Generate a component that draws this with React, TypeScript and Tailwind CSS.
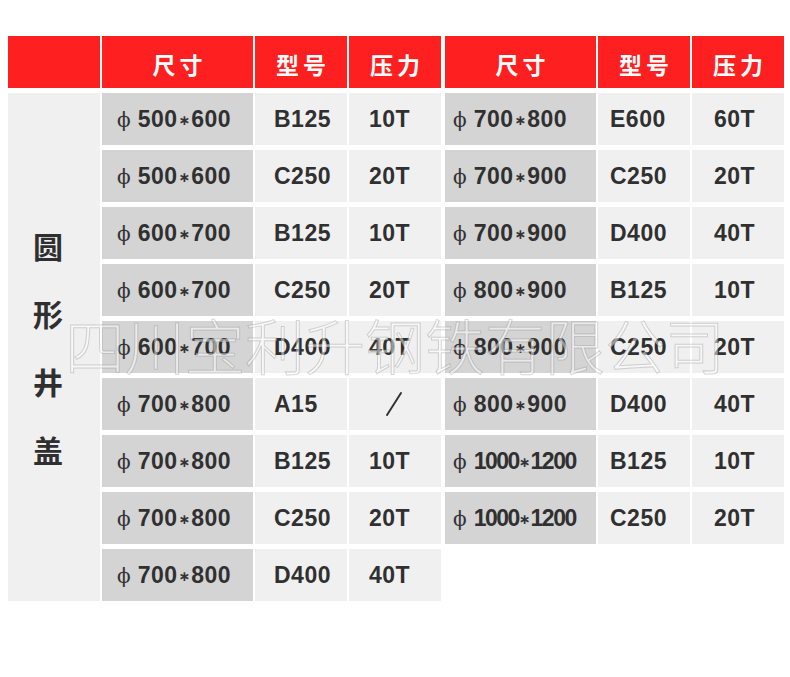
import React from "react";

type Row = [string, string, string];

const leftRows: Row[] = [
  ["500∗600", "B125", "10T"],
  ["500∗600", "C250", "20T"],
  ["600∗700", "B125", "10T"],
  ["600∗700", "C250", "20T"],
  ["600∗700", "D400", "40T"],
  ["700∗800", "A15", "/"],
  ["700∗800", "B125", "10T"],
  ["700∗800", "C250", "20T"],
  ["700∗800", "D400", "40T"],
];

const rightRows: Row[] = [
  ["700∗800", "E600", "60T"],
  ["700∗900", "C250", "20T"],
  ["700∗900", "D400", "40T"],
  ["800∗900", "B125", "10T"],
  ["800∗900", "C250", "20T"],
  ["800∗900", "D400", "40T"],
  ["1000∗1200", "B125", "10T"],
  ["1000∗1200", "C250", "20T"],
];

const num = "font-['Liberation_Sans',Arial,sans-serif] font-bold text-[23px] text-[#303030]";

function Size({ v }: { v: string }) {
  const [a, b] = v.split("∗");
  const long = v.length > 8;
  return (
    <span className="flex items-center">
      <span className="font-['DejaVu_Serif','Liberation_Serif',serif] font-normal text-[20px] text-[#333] mr-[7px] mt-[2px]">ϕ</span>
      <span className={long ? `${num} tracking-[-1.5px]` : `${num} tracking-[0.5px]`}>{a}</span>
      <span className={long ? "font-['DejaVu_Sans',sans-serif] font-bold text-[14px] text-[#333] mt-[3px] mx-[0px]" : "font-['DejaVu_Sans',sans-serif] font-bold text-[14px] text-[#333] mt-[3px] mx-[1px]"}>∗</span>
      <span className={long ? `${num} tracking-[-1.5px]` : `${num} tracking-[0.5px]`}>{b}</span>
    </span>
  );
}

function Header({ text }: { text: string }) {
  return (
    <div className="bg-[#fe2020] h-[52px] flex items-center justify-center pt-[5px]">
      <span className="font-['Noto_Sans_CJK_SC',sans-serif] font-bold text-[23px] text-white tracking-[4px] pl-[4px]">{text}</span>
    </div>
  );
}

function Pressure({ v }: { v: string }) {
  if (v === "/") {
    return (
      <svg width="18" height="26" viewBox="0 0 18 26" className="ml-[16px]">
        <line x1="2" y1="24" x2="16" y2="2" stroke="#333" strokeWidth="2" strokeLinecap="round" />
      </svg>
    );
  }
  return <span className={`${num} tracking-[0.5px]`}>{v}</span>;
}

export default function App() {
  return (
    <div className="w-[790px] h-[677px] bg-white relative overflow-hidden">
      <div className="flex gap-[4px] pl-[8px] pt-[36px]">
        {/* Left table */}
        <div className="grid grid-cols-[92px_151px_92px_92px] gap-x-[2px] gap-y-[5px] auto-rows-[52px]">
          <div className="bg-[#fe2020]" />
          <Header text="尺寸" />
          <Header text="型号" />
          <Header text="压力" />
          <div className="row-span-9 bg-[#f0f0f0] flex flex-col items-center justify-center pr-[12px] gap-[32px]">
            {"圆形井盖".split("").map((c) => (
              <span key={c} className="font-['Noto_Sans_CJK_SC',sans-serif] font-bold text-[30px] leading-[36px] text-[#2f2f2f]">{c}</span>
            ))}
          </div>
          {leftRows.map((r, i) => (
            <React.Fragment key={i}>
              <div className="bg-[#d4d4d4] flex items-center pl-[15px]">
                <Size v={r[0]} />
              </div>
              <div className="bg-[#f0f0f0] flex items-center pl-[19px]">
                <span className={`${num} tracking-[0.5px]`}>{r[1]}</span>
              </div>
              <div className="bg-[#f0f0f0] flex items-center pl-[20px]">
                <Pressure v={r[2]} />
              </div>
            </React.Fragment>
          ))}
        </div>
        {/* Right table */}
        <div className="grid grid-cols-[151px_92px_92px] gap-x-[2px] gap-y-[5px] auto-rows-[52px] content-start">
          <Header text="尺寸" />
          <Header text="型号" />
          <Header text="压力" />
          {rightRows.map((r, i) => (
            <React.Fragment key={i}>
              <div className="bg-[#d4d4d4] flex items-center pl-[8px]">
                <Size v={r[0]} />
              </div>
              <div className="bg-[#f0f0f0] flex items-center pl-[12px]">
                <span className={`${num} tracking-[0.5px]`}>{r[1]}</span>
              </div>
              <div className="bg-[#f0f0f0] flex items-center pl-[22px]">
                <Pressure v={r[2]} />
              </div>
            </React.Fragment>
          ))}
        </div>
      </div>
      {/* Watermark */}
      <div className="absolute left-[65px] top-[308px] pointer-events-none font-['Noto_Sans_CJK_SC',sans-serif] font-light text-[60px] leading-[72px] whitespace-nowrap text-[rgba(255,255,255,0.5)] [-webkit-text-stroke:1px_rgba(120,120,120,0.3)]">
        四川宝利升钢铁有限公司
      </div>
    </div>
  );
}
